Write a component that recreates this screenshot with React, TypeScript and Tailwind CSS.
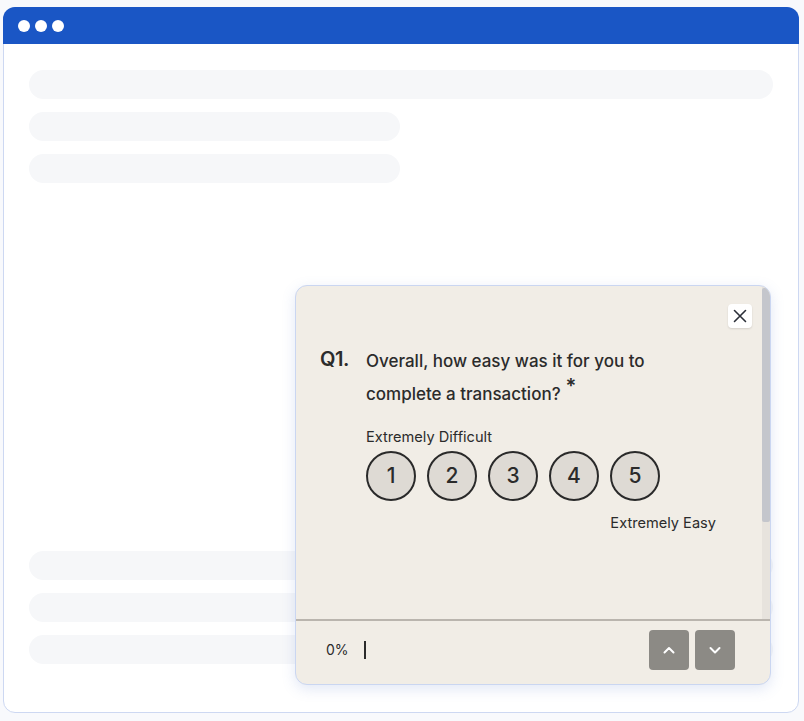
import React from "react";

const font = { fontFamily: "Inter, 'Noto Sans', sans-serif" };

export default function App() {
  return (
    <div className="min-h-[721px] w-[804px] bg-[#f8f9fc] pt-[7px] pl-[3px]" style={font}>
      <div className="relative w-[796px] h-[706px] rounded-[12px] border border-[#cdd8f2] bg-white overflow-visible">
        <div className="h-[37px] -mx-px -mt-px rounded-t-[12px] bg-[#1a56c5] flex items-center gap-[5px] pl-[15px]">
          <div className="w-[12px] h-[12px] rounded-full bg-white" />
          <div className="w-[12px] h-[12px] rounded-full bg-white" />
          <div className="w-[12px] h-[12px] rounded-full bg-white" />
        </div>
        <div className="px-[25px] pt-[26px] flex flex-col gap-[13px]">
          <div className="h-[29px] rounded-full bg-[#f6f7f9] w-[744px]" />
          <div className="h-[29px] rounded-full bg-[#f6f7f9] w-[371px]" />
          <div className="h-[29px] rounded-full bg-[#f6f7f9] w-[371px]" />
          <div className="h-[342px]" />
          <div className="h-[29px] rounded-full bg-[#f6f7f9] w-[744px]" />
          <div className="h-[29px] rounded-full bg-[#f6f7f9] w-[744px]" />
          <div className="h-[29px] rounded-full bg-[#f6f7f9] w-[744px]" />
        </div>

        {/* Survey popup */}
        <div className="absolute left-[291px] top-[277px] w-[476px] h-[400px] rounded-[12px] border border-[#cad6f1] bg-[#f1ede6] shadow-[0_4px_14px_rgba(90,120,200,0.18)] flex flex-col overflow-hidden">
          <div className="relative flex-1 flex">
            <div className="flex-1 relative">
              <button className="absolute right-[10px] top-[18px] w-[24px] h-[24px] rounded-[4px] bg-white shadow-[0_1px_2px_rgba(0,0,0,0.12)] flex items-center justify-center">
                <svg width="14" height="14" viewBox="0 0 14 14" fill="none" stroke="#2b2f38" strokeWidth="1.6" strokeLinecap="round">
                  <path d="M1.5 1.5 L12.5 12.5 M12.5 1.5 L1.5 12.5" />
                </svg>
              </button>
              <div className="flex pt-[62px] pl-[24px]">
                <div className="w-[46px] text-[20px] leading-[26px] font-semibold text-[#2b2b2b] tracking-[-0.4px] mt-[-2px]">Q1.</div>
                <div className="flex flex-col">
                  <div className="text-[17px] leading-[32px] font-medium text-[#2b2b2b] mt-[-3px]">
                    Overall, how easy was it for you to
                    <br />
                    complete a transaction?
                    <span className="relative top-[-7px] ml-[5px] text-[20px] font-semibold">*</span>
                  </div>
                  <div className="mt-[18px] text-[14.6px] leading-[18px] text-[#2b2b2b]">Extremely Difficult</div>
                  <div className="flex gap-[11px] mt-[5px]">
                    {[1, 2, 3, 4, 5].map((n) => (
                      <div
                        key={n}
                        className="w-[50px] h-[50px] rounded-full border-2 border-[#2a2a2a] bg-[#dedad4] flex items-center justify-center text-[21px] font-medium text-[#2b2b2b]"
                      >
                        {n}
                      </div>
                    ))}
                  </div>
                  <div className="w-[350px] text-right mt-[13px] text-[14.6px] leading-[18px] text-[#2b2b2b]">Extremely Easy</div>
                </div>
              </div>
            </div>
            <div className="w-[8px] bg-[#e7e3dd] flex flex-col">
              <div className="h-[234px] mt-[2px] rounded-[2px] bg-[#c4c6cc]" />
            </div>
          </div>
          <div className="h-[65px] border-t-2 border-[#bab5ae] flex items-start pt-[9px] pl-[30px] pr-[35px]">
            <span className="text-[14px] leading-[40px] text-[#2b2b2b]">0%</span>
            <div className="ml-[15px] mt-[11px] w-[2px] h-[18px] bg-[#2b2b2b]" />
            <div className="flex-1" />
            <div className="flex gap-[6px]">
              <button className="w-[40px] h-[40px] rounded-[4px] bg-[#8c8a85] flex items-center justify-center">
                <svg width="14" height="14" viewBox="0 0 14 14" fill="none" stroke="white" strokeWidth="2" strokeLinecap="round" strokeLinejoin="round">
                  <path d="M2.5 9.5 L7 5 L11.5 9.5" />
                </svg>
              </button>
              <button className="w-[40px] h-[40px] rounded-[4px] bg-[#8c8a85] flex items-center justify-center">
                <svg width="14" height="14" viewBox="0 0 14 14" fill="none" stroke="white" strokeWidth="2" strokeLinecap="round" strokeLinejoin="round">
                  <path d="M2.5 5 L7 9.5 L11.5 5" />
                </svg>
              </button>
            </div>
          </div>
        </div>
      </div>
    </div>
  );
}
